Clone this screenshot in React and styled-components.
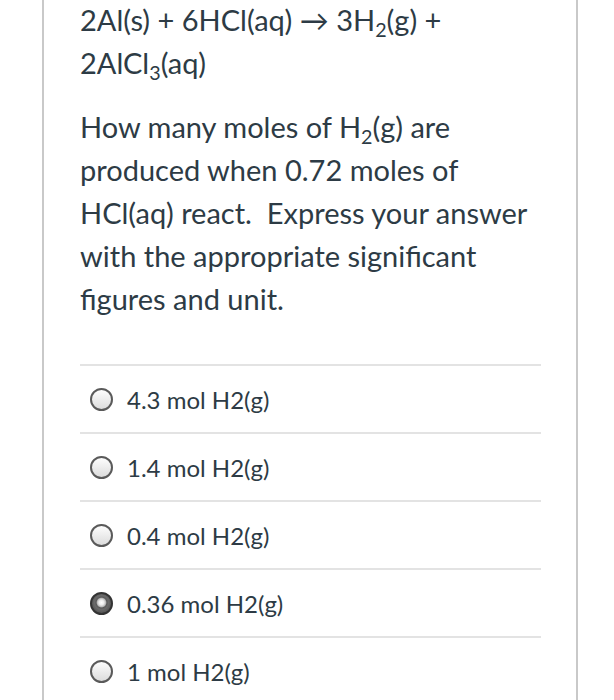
import React from "react"
import styled, { createGlobalStyle } from "styled-components"

const GlobalStyle = createGlobalStyle`
  html, body {
    margin: 0;
    padding: 0;
    background: #fff;
    overflow: hidden;
  }
  body {
    font-family: Lato, "Open Sans", "Liberation Sans", sans-serif;
    color: #2d3b45;
  }
`

const Card = styled.div`
  margin-left: 42px;
  width: 461px;
  min-height: 720px;
  padding: 0 35px 0 36px;
  border-left: 2px solid #c9c9c9;
  border-right: 2px solid #c9c9c9;
`

const Para = styled.p`
  margin: ${props => props.first ? "-2px 0 21px" : "0"};
  font-size: 29px;
  line-height: 43px;
`

const Sub = styled.sub`
  font-size: 0.68em;
  line-height: 0;
  vertical-align: -0.3em;
`

const Answers = styled.div`
  margin-top: 44px;
`

const Row = styled.label`
  display: flex;
  align-items: center;
  gap: 14px;
  height: 66px;
  padding-left: 10px;
  border-top: 2px solid #e3e3e3;
  font-size: 24px;
`

const Radio = styled.span`
  flex: none;
  box-sizing: border-box;
  width: 23px;
  height: 23px;
  border-radius: 50%;
  border: 2px solid ${props => props.checked ? "#333" : "#5a5a5a"};
  background: ${props => props.checked
    ? "radial-gradient(circle at 50% 45%, #ffffff 0, #ececec 2.5px, #b8b8b8 4.3px, #5a5a5a 5.3px, #6a6a6a 7px, #3e3e3e 100%)"
    : "linear-gradient(#fdfdfd, #dcdcdc)"};
`

const answers = [
  { text: "4.3 mol H2(g)" },
  { text: "1.4 mol H2(g)" },
  { text: "0.4 mol H2(g)" },
  { text: "0.36 mol H2(g)", checked: true },
  { text: "1 mol H2(g)" },
]

export default function App() {
  return (
    <>
      <GlobalStyle />
      <Card>
        <Para first>
          2Al(s) + 6HCl(aq) → 3H<Sub>2</Sub>(g) + 2AlCl<Sub>3</Sub>(aq)
        </Para>
        <Para>
          How many moles of H<Sub>2</Sub>(g) are produced when 0.72 moles of
          HCl(aq) react.&nbsp; Express your answer with the appropriate
          significant figures and unit.
        </Para>
        <Answers>
          {answers.map(a => (
            <Row key={a.text}>
              <Radio checked={a.checked} />
              {a.text}
            </Row>
          ))}
        </Answers>
      </Card>
    </>
  )
}
